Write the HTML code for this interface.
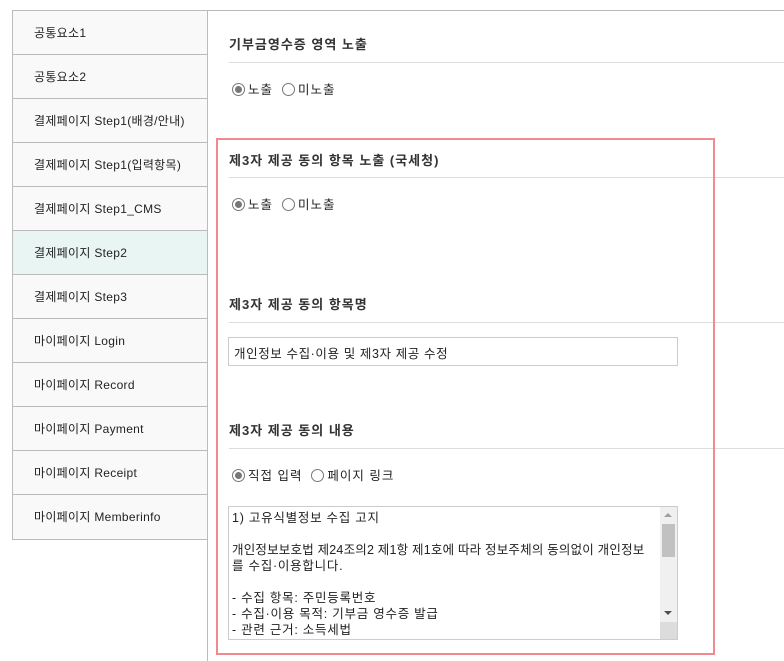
<!DOCTYPE html>
<html><head><meta charset="utf-8"><style>
*{margin:0;padding:0;box-sizing:border-box}
body{width:784px;height:661px;background:#fff;font-family:"Liberation Sans","Noto Sans CJK KR",sans-serif;font-size:12px;color:#222;position:relative;overflow:hidden;letter-spacing:0.6px}
.a{position:absolute}
.side{left:12px;top:10px;width:196px;border:1px solid #bbb;border-right:none}
.side div{height:44px;line-height:44px;padding-left:21px;background:#f9f9f9;border-bottom:1px solid #bbb;letter-spacing:0.3px}
.side div.on{background:#e9f5f2}
.side div:last-child{border-bottom:none}
.h{font-size:13px;font-weight:bold;color:#333;letter-spacing:1px}
.ln{height:1px;background:#ddd;left:229px;width:555px}
.r{display:inline-block;width:13px;height:13px;border:1px solid #777;border-radius:50%;vertical-align:-2px;position:relative;background:#fff;margin-right:3px}
.r.c::after{content:"";position:absolute;left:2px;top:2px;width:7px;height:7px;border-radius:50%;background:#777}
.rad{left:232px;font-size:12.5px;letter-spacing:1px}
</style></head><body>
<div class="a" style="left:12px;top:10px;width:772px;height:1px;background:#bbb"></div>
<div class="a side">
<div>공통요소1</div><div>공통요소2</div><div>결제페이지 Step1(배경/안내)</div><div>결제페이지 Step1(입력항목)</div><div>결제페이지 Step1_CMS</div><div class="on">결제페이지 Step2</div><div>결제페이지 Step3</div><div>마이페이지 Login</div><div>마이페이지 Record</div><div>마이페이지 Payment</div><div>마이페이지 Receipt</div><div>마이페이지 Memberinfo</div>
</div>
<div class="a" style="left:207px;top:10px;width:1px;height:651px;background:#bbb"></div>
<div class="a h" style="left:229px;top:34px">기부금영수증 영역 노출</div>
<div class="a ln" style="top:62px"></div>
<div class="a rad" style="top:79px"><span class="r c"></span>노출 &nbsp;<span class="r"></span>미노출</div>
<div class="a h" style="left:229px;top:150px">제3자 제공 동의 항목 노출 (국세청)</div>
<div class="a ln" style="top:177px"></div>
<div class="a rad" style="top:194px"><span class="r c"></span>노출 &nbsp;<span class="r"></span>미노출</div>
<div class="a h" style="left:229px;top:294px">제3자 제공 동의 항목명</div>
<div class="a ln" style="top:322px"></div>
<div class="a" style="left:228px;top:337px;width:450px;height:29px;border:1px solid #ccc;padding:5px 5px;font-size:12.5px">개인정보 수집·이용 및 제3자 제공 수정</div>
<div class="a h" style="left:229px;top:420px">제3자 제공 동의 내용</div>
<div class="a ln" style="top:448px"></div>
<div class="a rad" style="top:465px"><span class="r c"></span>직접 입력 &nbsp;<span class="r"></span>페이지 링크</div>
<div class="a" style="left:216px;top:138px;width:499px;height:517px;border:2px solid #f08a8e"></div>
<div class="a" style="left:228px;top:506px;width:450px;height:134px;border:1px solid #ccc;overflow:hidden;background:#fff">
<div style="padding:3px 0 0 3px;font-size:12.5px;line-height:16px;letter-spacing:0.75px;white-space:nowrap">1) 고유식별정보 수집 고지<br><br><span style="letter-spacing:0.2px">개인정보보호법 제24조의2 제1항 제1호에 따라 정보주체의 동의없이 개인정보</span><br>를 수집·이용합니다.<br><br>- 수집 항목: 주민등록번호<br>- 수집·이용 목적: 기부금 영수증 발급<br>- 관련 근거: 소득세법</div>
<div class="a" style="right:0;top:0;width:17px;height:132px;background:#f0f0f0">
<div class="a" style="left:4px;top:6px;border:4px solid transparent;border-bottom:4px solid #a0a0a0;border-top:none"></div>
<div class="a" style="left:2px;top:17px;width:13px;height:33px;background:#c1c1c1"></div>
<div class="a" style="left:4px;top:104px;border:4px solid transparent;border-top:4px solid #505050;border-bottom:none"></div>
<div class="a" style="left:0;top:115px;width:17px;height:17px;background:#dcdcdc"></div>
</div>
</div>
</body></html>
